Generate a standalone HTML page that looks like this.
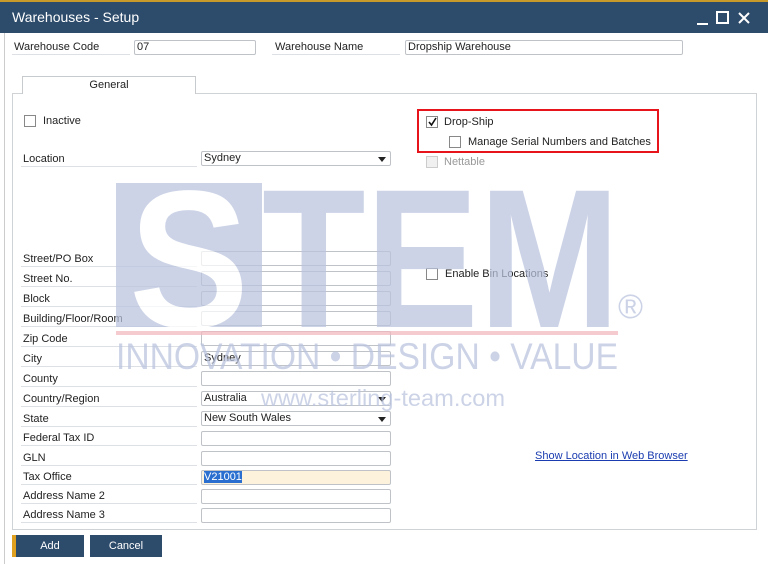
<!DOCTYPE html>
<html><head><style>
*{margin:0;padding:0;box-sizing:border-box}
body{width:768px;height:564px;overflow:hidden;background:#fff;font-family:"Liberation Sans",sans-serif;font-size:11px;color:#222;position:relative}
.a{position:absolute}
.title{left:0;top:0;width:768px;height:33px;background:#2d4b6b;border-top:2px solid #c89a2a}
.title span{position:absolute;left:12px;top:7px;color:#fff;font-size:14px}
.lbl{position:absolute;font-size:11px;white-space:nowrap}
.inp{position:absolute;height:15px;border:1px solid #bfc3c8;background:#fff;border-radius:2px;font-size:11px;padding-left:2px;line-height:13px}
.uline{position:absolute;height:1px;background:#dde0e4}
.cb{position:absolute;width:12px;height:12px;border:1px solid #888;background:#fff}
.dd::after{content:"";position:absolute;right:4px;top:5px;border-left:4px solid transparent;border-right:4px solid transparent;border-top:5px solid #222}
.btn{position:absolute;top:535px;height:22px;width:72px;background:#2d4b6b;color:#fff;text-align:center;line-height:22px;font-size:11px}
</style></head><body>
<div class="a title"><span>Warehouses - Setup</span>
<svg class="a" style="left:695px;top:8px" width="70" height="18"><path d="M2 14h11" stroke="#fff" stroke-width="2"/><rect x="22" y="2" width="11" height="11" fill="none" stroke="#fff" stroke-width="2"/><path d="M44 3l10 10M54 3l-10 10" stroke="#fff" stroke-width="2"/></svg></div>
<div class="a" style="left:4px;top:33px;width:1px;height:531px;background:#ccc"></div>

<div class="lbl" style="left:14px;top:41px">Warehouse Code</div><div class="uline" style="left:12px;top:54px;width:118px"></div>
<div class="inp" style="left:134px;top:40px;width:122px">07</div>
<div class="lbl" style="left:275px;top:41px">Warehouse Name</div><div class="uline" style="left:272px;top:54px;width:128px"></div>
<div class="inp" style="left:405px;top:40px;width:278px">Dropship Warehouse</div>

<div class="a" style="left:12px;top:93px;width:745px;height:437px;border:1px solid #d0d3d6"></div>
<div class="a" style="left:22px;top:76px;width:174px;height:18px;border:1px solid #c8cbce;border-bottom:none;background:#fff;text-align:center;line-height:17px">General</div>

<div class="cb" style="left:24px;top:115px"></div><div class="lbl" style="left:43px;top:115px">Inactive</div>
<div class="lbl" style="left:23px;top:153px">Location</div><div class="uline" style="left:21px;top:166px;width:176px"></div>
<div class="inp dd" style="left:201px;top:151px;width:190px">Sydney</div>

<div class="a" style="left:417px;top:109px;width:242px;height:44px;border:2px solid #e8141c"></div>
<div class="cb" style="left:426px;top:116px"><svg width="10" height="10" class="a" style="left:0;top:0"><path d="M2 5l2.5 3L9 1" fill="none" stroke="#111" stroke-width="1.6"/></svg></div>
<div class="lbl" style="left:444px;top:116px">Drop-Ship</div>
<div class="cb" style="left:449px;top:136px"></div><div class="lbl" style="left:468px;top:136px">Manage Serial Numbers and Batches</div>
<div class="cb" style="left:426px;top:156px;border-color:#ccc;background:#f0f0f0"></div><div class="lbl" style="left:444px;top:156px;color:#999">Nettable</div>
<div class="cb" style="left:426px;top:268px"></div><div class="lbl" style="left:445px;top:268px">Enable Bin Locations</div>
<div class="lbl" style="left:535px;top:450px;color:#1a3cb0;text-decoration:underline">Show Location in Web Browser</div>

<div class="lbl" style="left:23px;top:253px">Street/PO Box</div><div class="inp" style="left:201px;top:251px;width:190px"></div>
<div class="lbl" style="left:23px;top:273px">Street No.</div><div class="inp" style="left:201px;top:271px;width:190px"></div>
<div class="lbl" style="left:23px;top:293px">Block</div><div class="inp" style="left:201px;top:291px;width:190px"></div>
<div class="lbl" style="left:23px;top:313px">Building/Floor/Room</div><div class="inp" style="left:201px;top:311px;width:190px"></div>
<div class="lbl" style="left:23px;top:333px">Zip Code</div><div class="inp" style="left:201px;top:331px;width:190px"></div>
<div class="lbl" style="left:23px;top:353px">City</div><div class="inp" style="left:201px;top:351px;width:190px">Sydney</div>
<div class="lbl" style="left:23px;top:373px">County</div><div class="inp" style="left:201px;top:371px;width:190px"></div>
<div class="lbl" style="left:23px;top:393px">Country/Region</div><div class="inp dd" style="left:201px;top:391px;width:190px">Australia</div>
<div class="lbl" style="left:23px;top:413px">State</div><div class="inp dd" style="left:201px;top:411px;width:190px">New South Wales</div>
<div class="lbl" style="left:23px;top:432px">Federal Tax ID</div><div class="inp" style="left:201px;top:431px;width:190px"></div>
<div class="lbl" style="left:23px;top:452px">GLN</div><div class="inp" style="left:201px;top:451px;width:190px"></div>
<div class="lbl" style="left:23px;top:471px">Tax Office</div><div class="inp" style="left:201px;top:470px;width:190px;background:#fdf3dc"><span style="background:#2a6fd0;color:#fff">V21001</span></div>
<div class="lbl" style="left:23px;top:490px">Address Name 2</div><div class="inp" style="left:201px;top:489px;width:190px"></div>
<div class="lbl" style="left:23px;top:509px">Address Name 3</div><div class="inp" style="left:201px;top:508px;width:190px"></div>
<div class="uline" style="left:21px;top:266px;width:176px"></div><div class="uline" style="left:21px;top:286px;width:176px"></div><div class="uline" style="left:21px;top:306px;width:176px"></div><div class="uline" style="left:21px;top:326px;width:176px"></div><div class="uline" style="left:21px;top:346px;width:176px"></div><div class="uline" style="left:21px;top:366px;width:176px"></div><div class="uline" style="left:21px;top:386px;width:176px"></div><div class="uline" style="left:21px;top:406px;width:176px"></div><div class="uline" style="left:21px;top:426px;width:176px"></div><div class="uline" style="left:21px;top:445px;width:176px"></div><div class="uline" style="left:21px;top:465px;width:176px"></div><div class="uline" style="left:21px;top:484px;width:176px"></div><div class="uline" style="left:21px;top:503px;width:176px"></div><div class="uline" style="left:21px;top:522px;width:176px"></div>

<div class="btn" style="left:12px;border-left:4px solid #e0a020">Add</div>
<div class="btn" style="left:90px">Cancel</div>

<svg class="a" style="left:0;top:0;opacity:0.72" width="768" height="564">
<rect x="116" y="183" width="146" height="144" fill="#b9c3de"/>
<text x="189" y="327" text-anchor="middle" font-family="Liberation Sans" font-weight="bold" font-size="196" fill="#fff" textLength="120" lengthAdjust="spacingAndGlyphs">S</text>
<text x="262" y="327" font-family="Liberation Sans" font-weight="bold" font-size="198" fill="#b9c3de" textLength="358" lengthAdjust="spacingAndGlyphs">TEM</text>
<text x="618" y="318" font-family="Liberation Sans" font-size="34" fill="#b9c3de">®</text>
<rect x="116" y="331" width="502" height="4" fill="#f2b8bd"/>
<text x="116" y="369" font-family="Liberation Sans" font-size="37" fill="#b9c3de" textLength="502" lengthAdjust="spacingAndGlyphs">INNOVATION • DESIGN • VALUE</text>
<text x="261" y="406" font-family="Liberation Sans" font-size="23" fill="#b9c3de" textLength="244" lengthAdjust="spacingAndGlyphs">www.sterling-team.com</text>
</svg>
</body></html>
